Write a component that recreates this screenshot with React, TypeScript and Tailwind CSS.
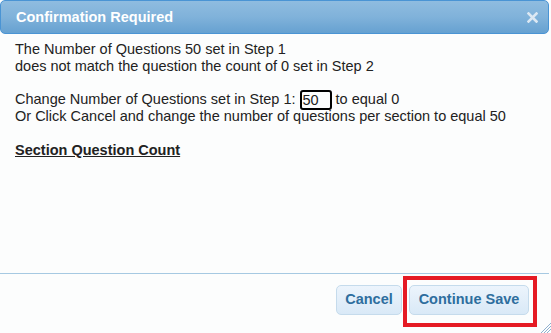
import React from "react";

export default function App() {
  return (
    <div className="w-[551px] h-[333px] bg-[#fcfdfd] relative overflow-hidden font-['Liberation_Sans',Arial,sans-serif]">
      <div className="w-[549px] h-[333px] flex flex-col">
        <div className="h-[34px] shrink-0 rounded-[5px] border border-[#4a94d4] bg-linear-to-b from-[#8fbce0] via-[#80b2da] to-[#66a1d1] flex items-center justify-between pl-[15px] pr-[10px]">
          <span className="text-white font-bold text-[14.5px] leading-none">Confirmation Required</span>
          <svg width="11" height="11" viewBox="0 0 11 11" className="mt-[1px]">
            <path d="M1.5 1.5 L9.5 9.5 M9.5 1.5 L1.5 9.5" stroke="#dce8f3" strokeWidth="2.6" strokeLinecap="square" />
          </svg>
        </div>
        <div className="flex-1 px-[15px] pt-[7px] text-[14.5px] leading-[16.7px] text-[#222]">
          <div>The Number of Questions 50 set in Step 1</div>
          <div>does not match the question the count of 0 set in Step 2</div>
          <div className="h-[16.7px]" />
          <div>
            Change Number of Questions set in Step 1:{" "}
            <span className="inline-block align-middle w-[32px] h-[20px] -my-[2px] border-2 border-black rounded-[3px] px-[1px] leading-[16px] text-[14.5px]">
              50
            </span>{" "}
            to equal 0
          </div>
          <div>Or Click Cancel and change the number of questions per section to equal 50</div>
          <div className="h-[16.7px]" />
          <div className="font-bold underline">Section Question Count</div>
        </div>
        <div className="h-[60px] shrink-0 border-t border-[#a6c9e2] flex justify-end items-start pt-[11px] pr-[20px] gap-[7px]">
          <button className="h-[30px] w-[66px] rounded-[5px] border border-[#c5dbec] bg-linear-to-b from-[#ecf4fc] to-[#d9e9f7] text-[#2e6e9e] font-bold text-[14.5px]">
            Cancel
          </button>
          <div className="relative">
            <button className="h-[30px] w-[120px] rounded-[5px] border border-[#c5dbec] bg-linear-to-b from-[#ecf4fc] to-[#d9e9f7] text-[#2e6e9e] font-bold text-[14.5px]">
              Continue Save
            </button>
            <div className="absolute -left-[6px] -right-[8px] -top-[9px] -bottom-[12px] border-4 border-[#e51a24]" />
          </div>
        </div>
      </div>
      <svg width="12" height="12" viewBox="0 0 12 12" className="absolute right-0 bottom-0">
        <path d="M12 2 L2 12 M12 5 L5 12 M12 8 L8 12" stroke="#8fb0cf" strokeWidth="1" />
      </svg>
    </div>
  );
}
